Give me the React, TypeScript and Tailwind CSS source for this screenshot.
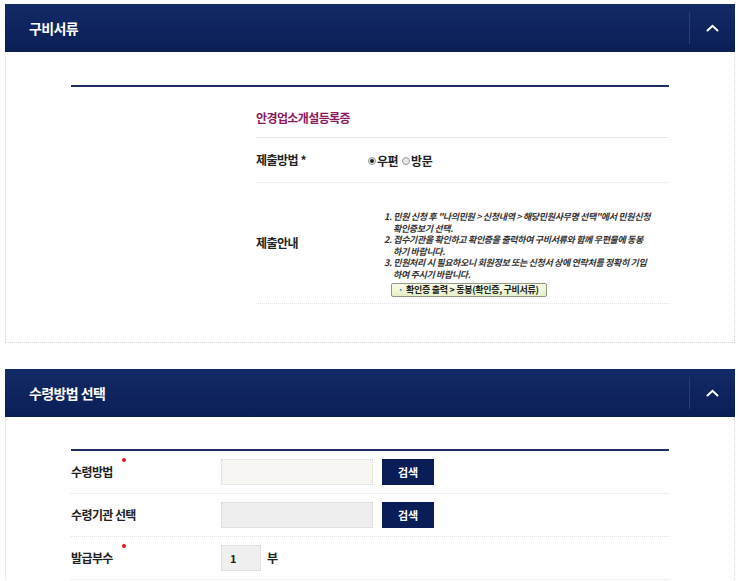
import type { ReactNode } from 'react';

const NAVY = 'bg-[#0d2159]';

function PanelHeader({ title }: { title: string }) {
  return (
    <div className={`flex h-[48px] items-center justify-between ${NAVY} bg-gradient-to-b from-[#122a66] to-[#0b1e56]`}>
      <h2 className="pl-[24px] text-[14px] font-bold tracking-[-0.6px] text-white">{title}</h2>
      <div className="flex h-full items-center">
        <span className="h-[32px] w-px bg-[#2b3d74]" />
        <span className="flex w-[45px] justify-center">
          <svg width="13" height="8" viewBox="0 0 13 8" fill="none">
            <path d="M1.5 6.5L6.5 1.8L11.5 6.5" stroke="white" strokeWidth="2" strokeLinecap="round" />
          </svg>
        </span>
      </div>
    </div>
  );
}

function Radio({ checked, label }: { checked?: boolean; label: string }) {
  return (
    <label className="flex items-center gap-[1px]">
      <span className="flex h-[8px] w-[8px] items-center justify-center rounded-full border border-[#9a9a9a] bg-[#e8e8e8]">
        {checked && <span className="h-[4px] w-[4px] rounded-full bg-[#222]" />}
      </span>
      <span>{label}</span>
    </label>
  );
}

function Required() {
  return <span className="relative -top-[12px] ml-[9px] inline-block h-[4px] w-[4px] rounded-full bg-[#e5141b]" />;
}

function FormRow({ label, children }: { label: ReactNode; children: ReactNode }) {
  return (
    <div className="flex h-[43px] items-center border-b border-dotted border-[#e2e2e2]">
      <div className="flex w-[150px] items-center text-[12px] font-bold tracking-[-0.6px] text-[#222]">{label}</div>
      <div className="flex items-center">{children}</div>
    </div>
  );
}

export default function App() {
  return (
    <div className="min-h-[581px] w-[740px] bg-white pt-[4px] font-['Noto_Sans_CJK_KR','Noto_Sans',sans-serif]">
      {/* 구비서류 */}
      <section className="mx-[5px]">
        <PanelHeader title="구비서류" />
        <div className="border-x border-b border-dotted border-[#d6d6d6] px-[65px] pt-[33px] pb-[38px]">
          <div className="border-t-2 border-[#1b2d63] pl-[185px]">
            <div className="h-[51px] border-b border-[#e8e8e8] pt-[22px] text-[12px] font-bold tracking-[-0.6px] text-[#8a1a5c]">
              안경업소개설등록증
            </div>
            <div className="flex h-[45px] items-center border-b border-dotted border-[#e2e2e2] text-[12px] font-bold tracking-[-0.5px] text-[#222]">
              <div className="w-[112px]">제출방법 *</div>
              <div className="flex items-center gap-[4px] pt-[2px]">
                <Radio checked label="우편" />
                <Radio label="방문" />
              </div>
            </div>
            <div className="flex h-[121px] items-stretch border-b border-dotted border-[#e2e2e2]">
              <div className="flex w-[112px] items-center text-[12px] font-bold tracking-[-0.5px] text-[#222]">
                제출안내
              </div>
              <div className="flex flex-col justify-end pb-[6px] pl-[16px]">
                <ol className="text-[9px] font-semibold italic leading-[11.5px] tracking-[-0.35px] text-[#333]">
                  <li className="whitespace-nowrap pl-[9px] -indent-[9px]">
                    1. 민원 신청 후 "나의민원 &gt; 신청내역 &gt; 해당민원사무명 선택"에서 민원신청
                    <br />
                    확인증보기 선택.
                  </li>
                  <li className="whitespace-nowrap pl-[9px] -indent-[9px]">
                    2. 접수기관을 확인하고 확인증을 출력하여 구비서류와 함께 우편물에 동봉
                    <br />
                    하기 바랍니다.
                  </li>
                  <li className="whitespace-nowrap pl-[9px] -indent-[9px]">
                    3. 민원처리 시 필요하오니 회원정보 또는 신청서 상에 연락처를 정확히 기입
                    <br />
                    하여 주시기 바랍니다.
                  </li>
                </ol>
                <div className="ml-[7px] mt-[3px] flex h-[14px] w-[156px] items-center rounded-[2px] border border-[#8f9a82] bg-gradient-to-b from-[#fafde8] to-[#e6f0c8] pl-[6px] text-[9px] font-bold tracking-[-0.3px] text-[#222]">
                  <span className="mr-[3px] text-[#2a7fc4]">·</span>
                  확인증 출력 &gt; 동봉(확인증, 구비서류)
                </div>
              </div>
            </div>
          </div>
        </div>
      </section>

      {/* 수령방법 선택 */}
      <section className="mx-[5px] mt-[26px]">
        <PanelHeader title="수령방법 선택" />
        <div className="border-x border-dotted border-[#d6d6d6] px-[65px] pt-[32px] pb-[10px]">
          <div className="border-t-2 border-[#1b2d63]">
            <FormRow
              label={
                <>
                  수령방법
                  <Required />
                </>
              }
            >
              <div className="h-[26px] w-[152px] border border-dotted border-[#d8d8d8] bg-[#f8f6f3]" />
              <button className="ml-[9px] h-[26px] w-[52px] bg-[#0b1d57] text-[11px] font-bold text-white">검색</button>
            </FormRow>
            <FormRow label="수령기관 선택">
              <div className="h-[26px] w-[152px] border border-dotted border-[#d4d4d4] bg-[#eeeeee]" />
              <button className="ml-[9px] h-[26px] w-[52px] bg-[#0b1d57] text-[11px] font-bold text-white">검색</button>
            </FormRow>
            <FormRow
              label={
                <>
                  발급부수
                  <Required />
                </>
              }
            >
              <div className="flex h-[26px] w-[40px] items-center border border-dotted border-[#d4d4d4] bg-[#f0f0f0] pl-[8px] text-[11px] font-bold text-[#222]">
                1
              </div>
              <span className="ml-[6px] text-[12px] font-bold text-[#222]">부</span>
            </FormRow>
          </div>
        </div>
      </section>
    </div>
  );
}
